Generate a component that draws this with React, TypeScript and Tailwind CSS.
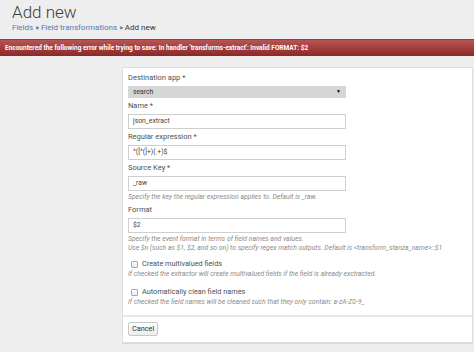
const font = { fontFamily: 'Roboto, "Liberation Sans", sans-serif' }

function Label({ children }: { children: React.ReactNode }) {
  return <div className="h-[16px] leading-[16px] text-[7.5px] font-normal text-[#505050]">{children}</div>
}

function Help({ children }: { children: React.ReactNode }) {
  return <div className="text-[6.8px] leading-[9px] italic text-[#8a8a8a] whitespace-nowrap">{children}</div>
}

function Input({ value }: { value: string }) {
  return (
    <div className="w-[218px] h-[15px] border border-[#cfcfcf] bg-white px-[4px] text-[6.8px] leading-[13px] text-[#444]">
      {value}
    </div>
  )
}

function Checkbox({ label }: { label: string }) {
  return (
    <div className="flex items-center gap-[4px] h-[12px]">
      <span className="w-[7px] h-[7px] border border-[#aaa] rounded-[1px] bg-gradient-to-b from-white to-[#e8e8e8] ml-[3px]" />
      <span className="text-[7.3px] text-[#505050]">{label}</span>
    </div>
  )
}

export default function App() {
  return (
    <div className="w-[474px] h-[352px] bg-[#eeeeee] overflow-hidden" style={font}>
      <div className="px-[12px] pt-[2px] h-[39px]">
        <h1 className="text-[17px] leading-[20px] font-light text-[#3c3c3c]">Add new</h1>
        <p className="text-[8px] leading-[12px] text-[#333]">
          <span className="text-[#5379af]">Fields</span> » <span className="text-[#5379af]">Field transformations</span> » Add new
        </p>
      </div>

      <div className="h-[17px] bg-gradient-to-b from-[#b85454] to-[#8c2828] border-t border-[#9c3a3a] px-[5px] text-[6.5px] leading-[16px] font-bold text-white whitespace-nowrap">
        Encountered the following error while trying to save: In handler 'transforms-extract': Invalid FORMAT: $2
      </div>

      <div className="pt-[11px] pl-[122px] pr-[1px]">
        <div className="bg-white border border-[#dedede] h-[276px] shadow-[0_1px_0_#d8d8d8]">
          <div className="px-[5px] pt-[2px] h-[247px]">
            <Label>Destination app *</Label>
            <div className="w-[218px] h-[12px] bg-[#d6d6d6] flex items-center justify-between px-[5px] text-[6.8px] text-[#333]">
              <span>search</span>
              <span className="text-[5px] text-black">▼</span>
            </div>
            <Label>Name *</Label>
            <Input value="json_extract" />
            <Label>Regular expression *</Label>
            <Input value="^([^(]+)(.+)$" />
            <Label>Source Key *</Label>
            <Input value="_raw" />
            <div className="mt-[2px]"><Help>Specify the key the regular expression applies to. Default is _raw.</Help></div>
            <Label>Format</Label>
            <Input value="$2" />
            <div className="mt-[2px]">
              <Help>Specify the event format in terms of field names and values.</Help>
              <Help>Use $n (such as $1, $2, and so on) to specify regex match outputs. Default is &lt;transform_stanza_name&gt;::$1</Help>
            </div>
            <div className="mt-[5px]"><Checkbox label="Create multivalued fields" /></div>
            <Help>If checked the extractor will create multivalued fields if the field is already exctracted.</Help>
            <div className="mt-[7px]"><Checkbox label="Automatically clean field names" /></div>
            <Help>If checked the field names will be cleaned such that they only contain: a-zA-Z0-9_</Help>
          </div>
          <div className="flex border-t-2 border-[#e6e6e6] px-[5px] pt-[5px]">
            <button className="h-[14px] px-[3px] border border-[#c8c8c8] rounded-[2px] bg-gradient-to-b from-white to-[#ececec] text-[7.3px] leading-[12px] text-[#333]">
              Cancel
            </button>
          </div>
        </div>
      </div>
    </div>
  )
}
